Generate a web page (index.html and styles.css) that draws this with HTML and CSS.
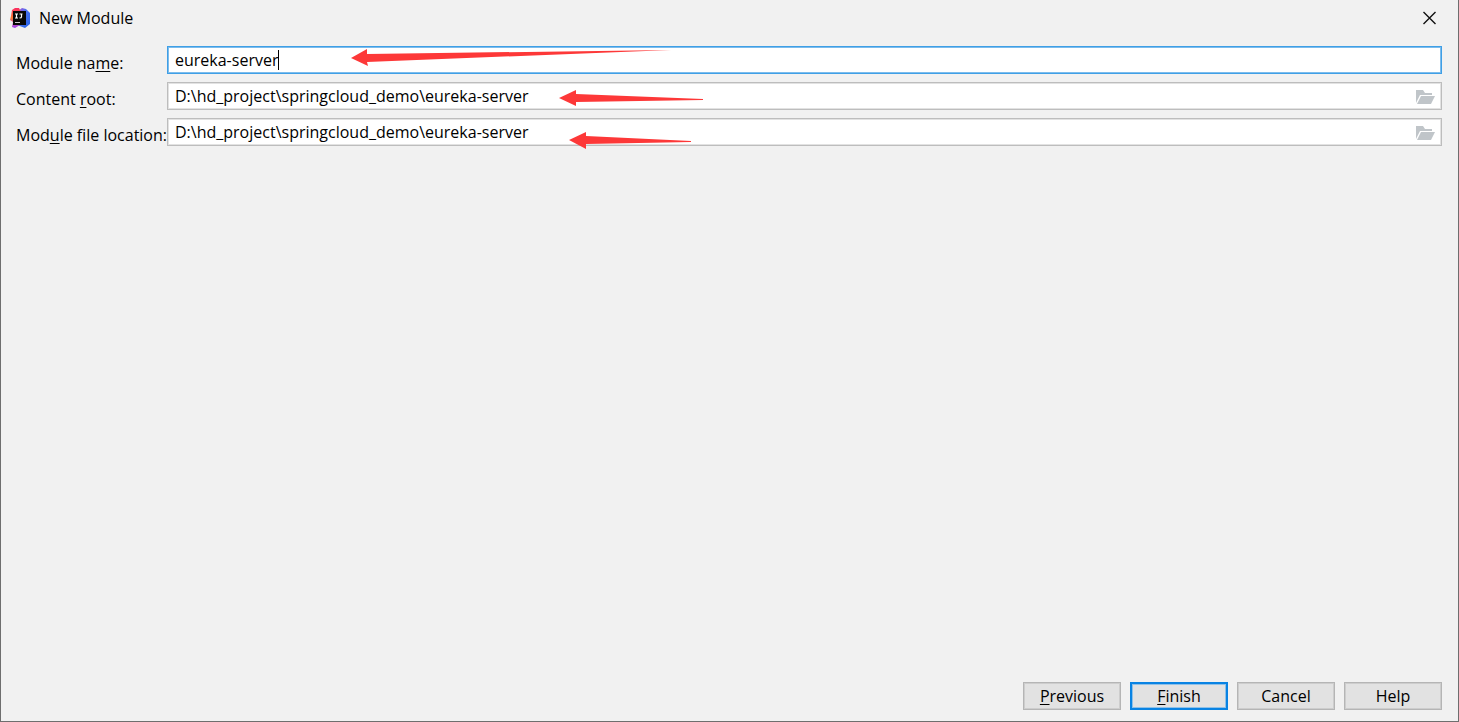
FILE: index.html
```html
<!DOCTYPE html>
<html lang="en">
<head>
    <meta charset="UTF-8">
    <meta name="viewport" content="width=device-width, initial-scale=1.0">
    <title>New Module</title>
    <link rel="stylesheet" href="styles.css">
</head>
<body>
    <form class="dialog">
        <header class="title-bar">
            <svg class="logo" viewBox="0 0 20 20" aria-hidden="true">
                <defs>
                    <linearGradient id="warm" x1="0" y1="0" x2="0" y2="1">
                        <stop offset="0" stop-color="#fb2a62"/>
                        <stop offset="0.5" stop-color="#fd7a2c"/>
                        <stop offset="0.7" stop-color="#d05a9a"/>
                        <stop offset="1" stop-color="#9a3cf5"/>
                    </linearGradient>
                    <linearGradient id="cool" x1="0" y1="0" x2="1" y2="1">
                        <stop offset="0" stop-color="#c04ad0"/>
                        <stop offset="0.4" stop-color="#4a72f0"/>
                        <stop offset="1" stop-color="#2563e8"/>
                    </linearGradient>
                </defs>
                <path d="M8 3L12 0L16 1L20 5L20 16L15 20L7 17Z" fill="url(#cool)"/>
                <path d="M2 2L5 0L9 0L11 4L10 17L5 20L2 19L3 14L0 12L1 8Z" fill="url(#warm)"/>
                <path d="M3 3h13v14H3z" fill="#080808"/>
                <path d="M5 6h3M6.500 6v4M5 10h3M9.500 6h3M11.500 6v3q0 1-2 1" fill="none" stroke="#fff" stroke-width="1.200"/>
                <path d="M5 14h5v1H5z" fill="#ccc"/>
            </svg>
            <h1>New Module</h1>
            <button type="button" class="close-btn" aria-label="Close">
                <svg viewBox="0 0 12 12"><path d="M0 0L12 12M12 0L0 12"/></svg>
            </button>
        </header>
        <main class="fields">
            <label for="moduleName">Module na<u>m</u>e:</label>
            <div class="field">
                <input type="text" id="moduleName" class="focused" value="eureka-server">
                <span class="caret"></span>
                <svg class="arrow arrow-name" viewBox="0 0 320 18" aria-hidden="true"><path d="M0 9L16 0V5L320 1L16 13L17 17Z"/></svg>
            </div>
            <label for="contentRoot">Content <u>r</u>oot:</label>
            <div class="field">
                <input type="text" id="contentRoot" value="D:\hd_project\springcloud_demo\eureka-server">
                <button type="button" class="browse-btn" aria-label="Browse content root">
                    <svg viewBox="0 0 19 14"><path d="M0 0h7l2 3h7v2H4L0 13z"/><path d="M5 6h14l-4 8H1z"/></svg>
                </button>
                <svg class="arrow arrow-root" viewBox="0 0 144 18" aria-hidden="true"><path d="M0 9L17 1V5L144 10V11L17 13V17Z"/></svg>
            </div>
            <label for="fileLocation">Mod<u>u</u>le file location:</label>
            <div class="field">
                <input type="text" id="fileLocation" value="D:\hd_project\springcloud_demo\eureka-server">
                <button type="button" class="browse-btn" aria-label="Browse module file location">
                    <svg viewBox="0 0 19 14"><path d="M0 0h7l2 3h7v2H4L0 13z"/><path d="M5 6h14l-4 8H1z"/></svg>
                </button>
                <svg class="arrow arrow-location" viewBox="0 0 122 18" aria-hidden="true"><path d="M0 9L17 1V5L122 10V11L17 13V18Z"/></svg>
            </div>
        </main>
        <footer class="buttons">
            <button type="button"><u>P</u>revious</button>
            <button type="submit" class="default-btn"><u>F</u>inish</button>
            <button type="button">Cancel</button>
            <button type="button">Help</button>
        </footer>
    </form>
</body>
</html>
```
FILE: styles.css
```css
* { box-sizing: border-box; }
body { margin: 0; font-family: "Open Sans", "Noto Sans", sans-serif; font-size: 16px; line-height: 20px; color: #000; background-color: #f1f1f1; }
.dialog { display: flex; flex-direction: column; min-height: 100vh; border: 1px solid #6e6e6e; border-top: none; }

.title-bar { display: flex; align-items: center; height: 36px; padding: 0 22px 0 9px; }
.title-bar h1 { flex: 1; margin: 0 0 0 9px; font-size: 16px; font-weight: normal; }
.logo { width: 20px; height: 20px; }
.close-btn { display: flex; padding: 0; border: none; background: none; }
.close-btn svg { width: 13px; height: 12px; overflow: visible; fill: none; stroke: #111; stroke-width: 1.4; }

.fields { display: grid; grid-template-columns: 151px 1fr; row-gap: 8px; padding: 10px 16px 0 15px; }
.fields label { padding-top: 7px; white-space: nowrap; }
u { text-decoration-thickness: 1px; text-underline-offset: 2px; }
.field { position: relative; height: 28px; }
.field input { display: block; width: 100%; height: 28px; padding: 0 34px 1px 7px; border: 1px solid #bdbdbd; outline: none; background-color: #fff; box-shadow: inset 0 0 0 1px #e2e2e2; font: inherit; color: inherit; }
.field input.focused { border-color: #3f9fe6; box-shadow: inset 0 0 0 1px #7dbcec; }
.caret { position: absolute; left: 111px; top: 4px; width: 1px; height: 20px; background-color: #000; }
.browse-btn { position: absolute; right: 7px; top: 8px; display: flex; padding: 0; border: none; background: none; }
.browse-btn svg { width: 19px; height: 14px; fill: #c0c5c9; }

.arrow { position: absolute; height: 18px; fill: #fd3838; pointer-events: none; }
.arrow-name { left: 184px; top: 3px; width: 320px; }
.arrow-root { left: 392px; top: 7px; width: 144px; }
.arrow-location { left: 402px; top: 13px; width: 122px; }

.buttons { display: flex; justify-content: flex-end; gap: 9px; margin-top: auto; padding: 0 16px 11px; }
.buttons button { width: 98px; height: 28px; padding: 0 0 1px; border: 1px solid #b5b5b5; background-color: #e2e2e2; box-shadow: inset 0 0 0 1px #cdcdcd; font: inherit; color: inherit; }
.buttons .default-btn { padding: 0; border: 2px solid #0983e3; box-shadow: inset 0 0 0 1px #8fc1e8; }
```
